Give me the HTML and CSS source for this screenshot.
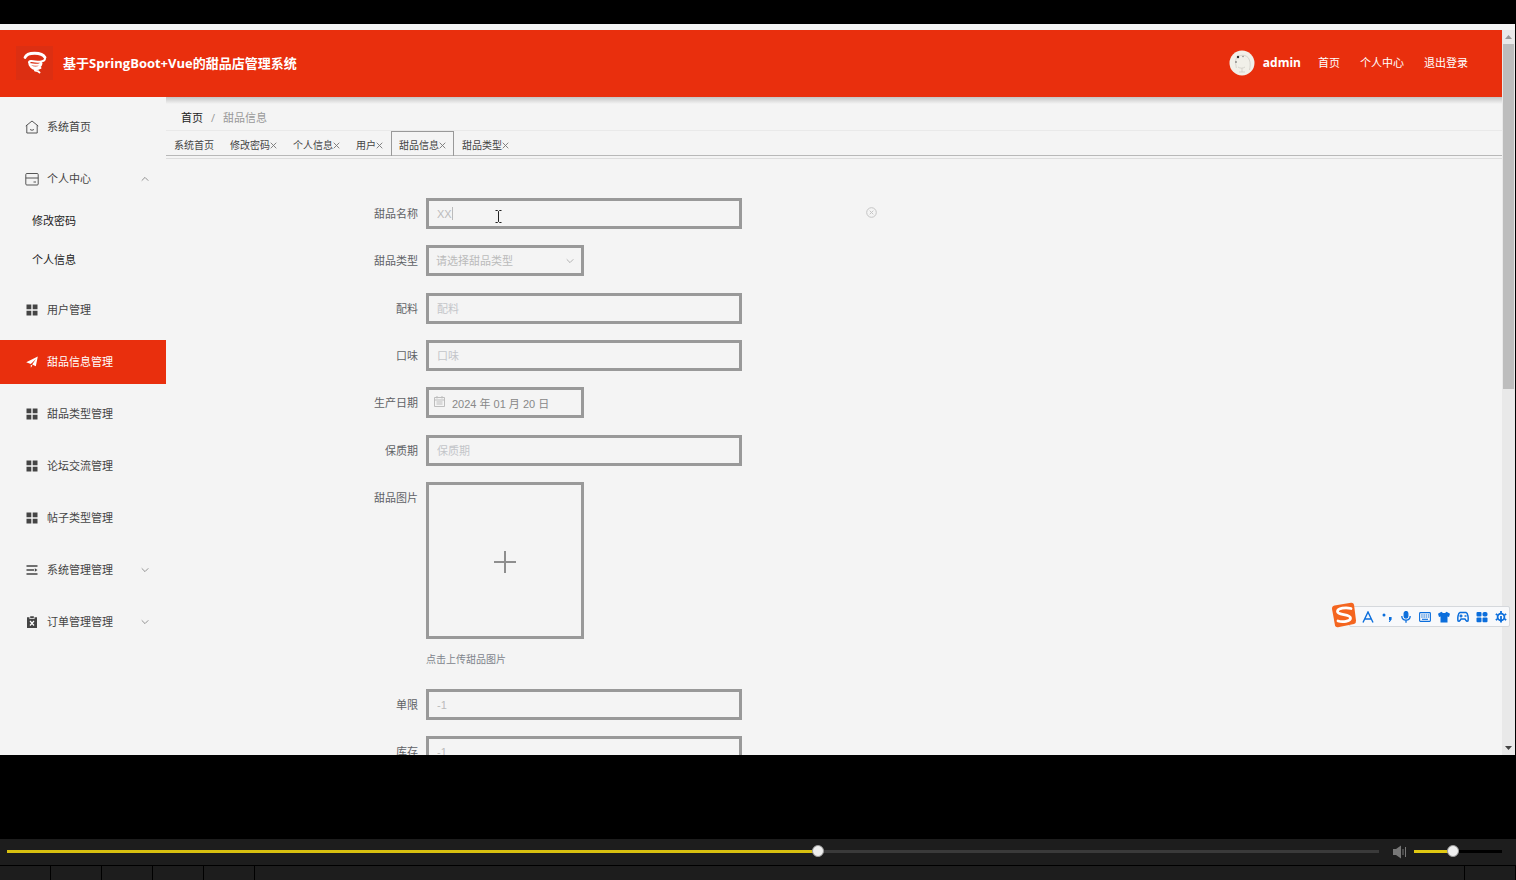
FILE: index.html
```html
<!DOCTYPE html>
<html lang="zh-CN">

<head>
  <meta charset="utf-8">
  <title>甜品店管理系统</title>
  <link rel="stylesheet" href="styles.css">
</head>

<body>
  <!-- shared icons -->
  <svg class="symbols">
    <symbol id="grid" viewBox="0 0 12 12">
      <path fill="currentColor" d="M.5.5h4.8v4.8H.5zM6.7.5h4.8v4.8H6.7zM.5 6.7h4.8v4.8H.5zM6.7 6.7h4.8v4.8H6.7z"/>
    </symbol>
    <symbol id="down" viewBox="0 0 8 8">
      <path fill="none" stroke="currentColor" stroke-width=".9" d="M.7 2.3 4 5.6l3.300-3.300"/>
    </symbol>
    <symbol id="close" viewBox="0 0 7 7">
      <path fill="none" stroke="currentColor" stroke-width=".9" d="M.7.7l5.600 5.600M6.300.7.7 6.300"/>
    </symbol>
  </svg>

  <div class="screen">
    <div class="page">
      <header class="header">
        <div class="logo">
          <svg width="24" height="24" viewBox="0 0 24 24" fill="none" stroke="#fff" stroke-linecap="round">
            <path stroke-width="2.800" d="M2 6.500C4 .8 19 .8 22 6.500"/>
            <path stroke-width="2" d="M22 6.500c.5 3-2 4-5 4.200-4 .3-11-2-11 .8 0 2.500 12 3.500 12 .3M6.500 12c-.5 3.500 3 4.500 6 4.500 3.500 0 5.500-1.500 6-4M8 16c2 2.500 6 3 9.500 1M12 19.500c1.500.2 3.500.6 4.500 2"/>
          </svg>
        </div>
        <h1 class="title">基于SpringBoot+Vue的甜品店管理系统</h1>
        <div class="user">
          <svg class="avatar" width="26" height="26" viewBox="0 0 26 26" fill="none">
            <circle cx="13" cy="13" r="12.500" fill="#f1f0e9"/>
            <path stroke="#cbc9c2" stroke-width=".7" d="M7 9c2-5 11-5 13 0 2 4 1 8 .5 11M7 9c-1 3 0 6 .3 9M9 17c2 1.500 5 1.500 7 0M13 18v4M10 22h6"/>
            <circle cx="9" cy="7" r="1.200" fill="#333"/>
            <circle cx="7" cy="12" r=".8" fill="#555"/>
            <circle cx="14" cy="6.500" r=".7" fill="#777"/>
          </svg>
          <span class="name">admin</span>
        </div>
        <nav class="links">
          <a href="#">首页</a>
          <a href="#">个人中心</a>
          <a href="#">退出登录</a>
        </nav>
      </header>

      <div class="body">
        <aside class="sidebar">
          <a class="item" href="#">
            <svg class="icon" viewBox="0 0 14 14" fill="none" stroke="currentColor" stroke-width=".9"><path d="M.8 6 7 1l6.200 5M1.800 5.300V13h10.400V5.300M5 9.300c1 1.200 3 1.200 4 0"/></svg>
            <span>系统首页</span>
          </a>
          <a class="item" href="#">
            <svg class="icon" viewBox="0 0 14 14" fill="none" stroke="currentColor" stroke-width=".9"><rect x=".8" y="1.500" width="12.400" height="11.500" rx="1"/><path d="M.8 6h12.400M8.500 10h2.500"/></svg>
            <span>个人中心</span>
            <svg class="arrow up"><use href="#down"/></svg>
          </a>
          <div class="submenu">
            <a href="#">修改密码</a>
            <a href="#">个人信息</a>
          </div>
          <a class="item" href="#"><svg class="icon small"><use href="#grid"/></svg><span>用户管理</span></a>
          <a class="item active" href="#">
            <svg class="icon small" viewBox="0 0 12 12" fill="currentColor"><path d="M.2 6.200 11.800.5 9.800 10.300 6.200 8.600 10 3 4.800 7.900z"/><path d="M4.800 8.700v3l1.600-2.200z"/></svg>
            <span>甜品信息管理</span>
          </a>
          <a class="item" href="#"><svg class="icon small"><use href="#grid"/></svg><span>甜品类型管理</span></a>
          <a class="item" href="#"><svg class="icon small"><use href="#grid"/></svg><span>论坛交流管理</span></a>
          <a class="item" href="#"><svg class="icon small"><use href="#grid"/></svg><span>帖子类型管理</span></a>
          <a class="item" href="#">
            <svg class="icon small" viewBox="0 0 12 12" fill="none" stroke="currentColor" stroke-width="1.300"><path d="M.5 2h11M.5 6h7.500M.5 10h11"/><path fill="currentColor" stroke="none" d="M8.800 4.200l2.700 1.800-2.700 1.800z"/></svg>
            <span>系统管理管理</span>
            <svg class="arrow"><use href="#down"/></svg>
          </a>
          <a class="item" href="#">
            <svg class="icon small" viewBox="0 0 12 12"><path fill="currentColor" d="M1 1.300h2.500V3h5V1.300H11V12H1zM4.200.2h3.600v2H4.200z"/><path stroke="#fff" stroke-width="1.200" d="M4 5l4 4.500M8 5 4 9.500"/></svg>
            <span>订单管理管理</span>
            <svg class="arrow"><use href="#down"/></svg>
          </a>
        </aside>

        <main class="main">
          <nav class="crumbs">
            <a href="#">首页</a><span>/</span><span>甜品信息</span>
          </nav>
          <nav class="tabs">
            <a class="tab" href="#">系统首页</a>
            <a class="tab" href="#">修改密码<svg><use href="#close"/></svg></a>
            <a class="tab" href="#">个人信息<svg><use href="#close"/></svg></a>
            <a class="tab" href="#">用户<svg><use href="#close"/></svg></a>
            <a class="tab current" href="#">甜品信息<svg><use href="#close"/></svg></a>
            <a class="tab" href="#">甜品类型<svg><use href="#close"/></svg></a>
          </nav>

          <form class="form">
            <div class="row">
              <label for="name">甜品名称</label>
              <div class="field wide">
                <input class="box" id="name" type="text" value="XX">
                <span class="caret"></span>
                <svg class="ibeam" width="7" height="13" viewBox="0 0 7 13" fill="none" stroke="#222"><path d="M.5.5h2l1 1 1-1h2M3.500 1.500v10M.5 12.500h2l1-1 1 1h2"/></svg>
              </div>
              <button class="clear" type="button" aria-label="清空">
                <svg width="11" height="11" viewBox="0 0 11 11" fill="none" stroke="#c4c4c4"><circle cx="5.500" cy="5.500" r="4.800"/><path d="M3.700 3.700l3.600 3.600M7.300 3.700 3.700 7.300"/></svg>
              </button>
            </div>
            <div class="row tall">
              <label for="type">甜品类型</label>
              <div class="field">
                <select class="box" id="type">
                  <option>请选择甜品类型</option>
                </select>
                <svg class="arrow"><use href="#down"/></svg>
              </div>
            </div>
            <div class="row">
              <label for="stuff">配料</label>
              <div class="field wide"><input class="box" id="stuff" type="text" placeholder="配料"></div>
            </div>
            <div class="row">
              <label for="taste">口味</label>
              <div class="field wide"><input class="box" id="taste" type="text" placeholder="口味"></div>
            </div>
            <div class="row tall">
              <label for="date">生产日期</label>
              <div class="field">
                <input class="box date" id="date" type="text" value="2024 年 01 月 20 日">
                <svg class="calendar" width="11" height="11" viewBox="0 0 11 11" fill="none" stroke="#bdbdbd"><path d="M.5 1.500h10v9H.5zM.5 4h10M3 0v2.500M8 0v2.500M2.500 6h6M2.500 8h6"/></svg>
              </div>
            </div>
            <div class="row">
              <label for="life">保质期</label>
              <div class="field wide"><input class="box" id="life" type="text" placeholder="保质期"></div>
            </div>
            <div class="row">
              <label for="upload">甜品图片</label>
              <div class="field">
                <button class="upload" id="upload" type="button">
                  <svg width="22" height="22" viewBox="0 0 22 22" stroke="#8e8e8e" stroke-width="2"><path d="M11 0v22M0 11h22"/></svg>
                </button>
                <p class="tip">点击上传甜品图片</p>
              </div>
            </div>
            <div class="row">
              <label for="limit">单限</label>
              <div class="field wide"><input class="box" id="limit" type="text" value="-1"></div>
            </div>
            <div class="row">
              <label for="stock">库存</label>
              <div class="field wide"><input class="box" id="stock" type="text" value="-1"></div>
            </div>
          </form>
        </main>
      </div>
    </div>

    <div class="scrollbar">
      <svg width="7" height="14" viewBox="0 0 7 14"><path fill="#999" d="M0 9l3.500-4L7 9z"/></svg>
      <div class="track"><div class="thumb"></div></div>
      <svg width="7" height="14" viewBox="0 0 7 14"><path fill="#444" d="M0 5l3.500 4L7 5z"/></svg>
    </div>

    <!-- input method bar -->
    <div class="ime">
      <svg class="sogou" width="26" height="26" viewBox="0 0 26 26">
        <path fill="#f4651f" d="M3.500 3.500 20 .8q2.500-.3 3 2l2 16q.3 2.500-2 3.200L7 25.200q-2.500.4-3-2L1 7q-.3-3 2.500-3.500z"/>
        <path fill="none" stroke="#fff" stroke-width="2.800" stroke-linecap="round" d="M20 6.500C15 5 6.500 6 6.500 9.500c0 4 13 2 13 6.500 0 3.500-8 4.500-12.500 3"/>
      </svg>
      <svg viewBox="0 0 12 12" fill="none" stroke="currentColor" stroke-width="1.400"><path d="M1 11.500 6 1l5 10.500M2.700 8h6.600"/></svg>
      <svg viewBox="0 0 12 12" fill="currentColor"><circle cx="3" cy="4" r="1.500"/><path d="M8 6h2.600v2.500L8.700 11H7.800l.9-2H8z"/></svg>
      <svg viewBox="0 0 12 12" fill="none" stroke="currentColor" stroke-width="1.300"><rect x="4.200" y=".6" width="3.600" height="6.500" rx="1.800" fill="currentColor"/><path d="M1.800 5c0 5.500 8.400 5.500 8.400 0M6 9v2.800"/></svg>
      <svg viewBox="0 0 12 12" fill="none" stroke="currentColor" stroke-width="1.100"><rect x=".6" y="1.600" width="10.800" height="8.800" rx=".8"/><path stroke-dasharray="1.500 .7" d="M2.200 4h8M2.200 6h8"/><path d="M3 8.300h6"/></svg>
      <svg viewBox="0 0 12 12" fill="currentColor"><path d="M3.500.8C4.500 2.500 7.500 2.500 8.500.8L12 2.800 11 6 9.500 5.500v6h-7v-6L1 6 0 2.800z"/></svg>
      <svg viewBox="0 0 12 12" fill="none" stroke="currentColor" stroke-width="1.500"><path d="M3 1.500h6C11 2 11.500 7 11 10 9.500 11 8.500 8.500 8 8H4C3.500 8.500 2.500 11 1 10 .5 7 1 2 3 1.500z"/><path d="M2.500 5h3M4 3.500v3M7.500 5h2"/></svg>
      <svg viewBox="0 0 12 12" fill="currentColor"><rect x=".5" y="1" width="5" height="4.600" rx="1"/><rect x="6.500" y="1" width="5" height="4.600" rx="1.800"/><rect x=".5" y="6.600" width="5" height="4.600" rx="1"/><rect x="6.500" y="6.600" width="5" height="4.600" rx="1"/></svg>
      <svg viewBox="0 0 12 12" fill="none" stroke="currentColor"><circle cx="6" cy="6" r="3.400" stroke-width="1.800"/><path stroke-width="1.800" d="M6 0v2M6 5v6.500M.8 3l1.700 1M11.200 3 9.500 4M.8 9l1.700-1M11.200 9 9.500 8"/></svg>
    </div>
  </div>

  <div class="letterbox"></div>

  <footer class="player">
    <input class="range seek" type="range" max="1000" value="592" aria-label="进度" style="--played: 59%">
    <svg width="15" height="14" viewBox="0 0 15 14"><path fill="#777" d="M1 4h3l5-3.500v13L4 10H1z"/><path stroke="#777" d="M11 4v6M13.500 2v10"/></svg>
    <input class="range volume" type="range" max="1000" value="434" aria-label="音量" style="--played: 44%">
  </footer>
  <div class="strip">
    <span></span><span></span><span></span><span></span><span></span><span class="rest"></span><span></span>
  </div>
</body>

</html>
```
FILE: styles.css
```css
* {
  box-sizing: border-box;
}

body {
  display: flex;
  flex-direction: column;
  height: 100vh;
  margin: 0;
  padding-top: 24px;
  overflow: hidden;
  background: #000;
  color: #444;
  font-family: "Open Sans", "Noto Sans CJK SC", sans-serif;
  font-size: 11px;
  line-height: 16px;
}

a {
  color: inherit;
  text-decoration: none;
}

button,
input,
select {
  margin: 0;
  font: inherit;
}

.symbols {
  display: none;
}

.screen {
  position: relative;
  display: flex;
  flex: 1;
  min-height: 0;
  padding-top: 6px;
  border-right: 1px solid #000;
  background: #f4f4f4;
}

.page {
  display: flex;
  flex: 1;
  flex-direction: column;
  min-width: 0;
  overflow: hidden;
}

/* header */
.header {
  display: flex;
  flex: none;
  align-items: center;
  height: 67px;
  padding: 0 34px 1px 16px;
  background: #e92f0d;
  color: #fff;
}

.logo {
  display: flex;
  align-items: center;
  justify-content: center;
  width: 37px;
  height: 34px;
  background: #dc2f12;
}

.title {
  margin: 0 0 0 10px;
  font-size: 13px;
  line-height: 20px;
}

.user {
  display: flex;
  align-items: center;
  gap: 8px;
  margin-left: auto;
}

.name {
  font-size: 12px;
  font-weight: bold;
}

.links {
  display: flex;
  gap: 20px;
  margin-left: 17px;
}

.body {
  display: flex;
  flex: 1;
  min-height: 0;
}

/* left menu */
.sidebar {
  display: flex;
  flex: none;
  flex-direction: column;
  width: 166px;
  padding-top: 8px;
}

.item {
  display: flex;
  flex: none;
  align-items: center;
  gap: 8px;
  height: 44px;
  margin-bottom: 8px;
  padding: 0 17px 0 25px;
}

.item.active {
  background: #e92f0d;
  color: #fff;
}

.icon {
  width: 14px;
  height: 14px;
}

.icon.small {
  width: 12px;
  height: 12px;
  margin: 1px;
}

.arrow {
  width: 8px;
  height: 8px;
  margin-left: auto;
  color: #888;
}

.arrow.up {
  transform: rotate(180deg);
}

.submenu {
  margin-top: -8px;
  padding-bottom: 9px;
  color: #222;
}

.submenu a {
  display: block;
  padding-left: 32px;
  line-height: 39px;
}

/* content */
.main {
  flex: 1;
  min-width: 0;
  overflow: hidden;
  background: linear-gradient(#c4c4c4, #f4f4f4 7px);
}

.crumbs {
  display: flex;
  gap: 8px;
  height: 34px;
  padding: 13px 15px 0;
  border-bottom: 1px solid #e9e9e9;
  color: #999;
}

.crumbs a {
  color: #222;
}

.tabs {
  display: flex;
  height: 28px;
  border-bottom: 1px solid #ddd;
  font-size: 10px;
  box-shadow: inset 0 -2px #f4f4f4, inset 0 -3px #b8b8b8;
}

.tab {
  display: flex;
  align-items: center;
  height: 25px;
  padding: 2px 7px 0;
  border: 1px solid transparent;
  border-bottom: 0;
}

.tab.current {
  border-color: #999;
}

.tab svg {
  width: 7px;
  height: 7px;
  color: #777;
}

.form {
  padding: 39px 0 0 160px;
}

.row {
  display: flex;
  align-items: flex-start;
  width: 551px;
  margin-bottom: 16px;
}

.row.tall {
  min-height: 32px;
}

.row label {
  width: 92px;
  margin-right: 8px;
  color: #606266;
  line-height: 31px;
  text-align: right;
}

.field {
  position: relative;
  width: 158px;
}

.field.wide {
  width: 316px;
}

.box {
  display: block;
  width: 100%;
  height: 31px;
  padding: 0 8px;
  border: 3px solid #999;
  border-radius: 0;
  outline: 0;
  appearance: none;
  background: transparent;
  color: #bbb;
  font-family: "Liberation Sans", "Noto Sans CJK SC", sans-serif;
}

select.box {
  padding: 0 7px;
}

.box::placeholder {
  color: #c3c5c9;
}

.box.date {
  padding-left: 23px;
  color: #888;
}

.field .arrow {
  position: absolute;
  top: 12px;
  right: 10px;
  color: #aaa;
}

.calendar {
  position: absolute;
  top: 9px;
  left: 8px;
}

.caret {
  position: absolute;
  top: 9px;
  left: 26px;
  width: 1px;
  height: 13px;
  background: #bbb;
}

.ibeam {
  position: absolute;
  top: 12px;
  left: 69px;
}

.clear {
  display: flex;
  margin: 9px 0 0 auto;
  padding: 0;
  border: 0;
  background: none;
}

.upload {
  display: flex;
  align-items: center;
  justify-content: center;
  width: 158px;
  height: 157px;
  padding: 3px 0 0;
  border: 3px solid #999;
  background: transparent;
}

.tip {
  margin: 12px 0 6px;
  color: #80848c;
  font-size: 10px;
}

/* page scrollbar */
.scrollbar {
  display: flex;
  flex: none;
  flex-direction: column;
  align-items: center;
  width: 13px;
  background: #e9e9e9;
}

.track {
  flex: 1;
  width: 11px;
}

.thumb {
  height: 49.500%;
  background: #bdbdbd;
}

.ime {
  position: absolute;
  right: 5px;
  bottom: 128px;
  display: flex;
  align-items: center;
  gap: 7px;
  height: 21px;
  padding: 0 2px 0 12px;
  border: 1px solid #d5d8dc;
  border-radius: 2px;
  background: #f8f9fb;
  color: #0b6edc;
}

.ime svg {
  width: 12px;
  height: 12px;
}

.ime .sogou {
  position: absolute;
  top: -5px;
  left: -19px;
  width: 26px;
  height: 26px;
}

/* video player */
.letterbox {
  flex: none;
  height: 84px;
}

.player {
  display: flex;
  flex: none;
  align-items: center;
  height: 26px;
  padding: 0 14px 1px 7px;
  background: #1d1d1d;
}

.range {
  height: 12px;
  appearance: none;
  background: none;
}

.range::-webkit-slider-runnable-track {
  height: 3px;
  background: linear-gradient(to right, #e0c812 var(--played), #000 var(--played));
}

.range::-webkit-slider-thumb {
  width: 12px;
  height: 12px;
  margin-top: -5px;
  border: 1px solid #999;
  border-radius: 50%;
  appearance: none;
  background: #eee;
}

.seek {
  flex: 1;
  min-width: 0;
  margin-right: 13px;
}

.seek::-webkit-slider-runnable-track {
  background: linear-gradient(to right, #d8c010 var(--played), #3a3a3a var(--played));
}

.volume {
  width: 88px;
  margin-left: 7px;
}

.strip {
  display: flex;
  flex: none;
  height: 15px;
  border-top: 1px solid #000;
  background: #1d1d1d;
}

.strip span {
  width: 51px;
  border-right: 1px solid #000;
}

.strip .rest {
  flex: 1;
}
```
